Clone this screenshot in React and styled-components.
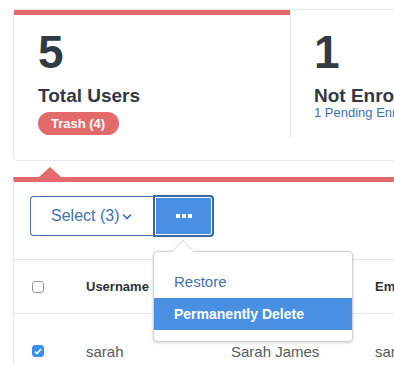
import styled, { createGlobalStyle } from 'styled-components'

const GlobalStyle = createGlobalStyle`
  html, body {
    margin: 0;
    padding: 0;
    background: #ffffff;
    font-family: 'Liberation Sans', Arial, sans-serif;
    overflow: hidden;
  }
`

const users = [
    { username: 'sarah', name: 'Sarah James', email: 'sarah@example.com', checked: true },
]

export default function App(){
    return(
        <Page>
            <GlobalStyle/>
            <StatsCard>
                <Stat active>
                    <Number>5</Number>
                    <Label>Total Users</Label>
                    <Badge>Trash (4)</Badge>
                </Stat>
                <Stat>
                    <Number>1</Number>
                    <Label>Not Enrolled</Label>
                    <SubLink>1 Pending Enrollment</SubLink>
                </Stat>
            </StatsCard>

            <Panel>
                <Toolbar>
                    <ButtonGroup>
                        <SelectButton>
                            Select (3)
                            <svg width="10" height="7" viewBox="0 0 10 7" fill="none">
                                <path d="M1 1.5l4 4 4-4" stroke="#3f6fae" strokeWidth="1.6" />
                            </svg>
                        </SelectButton>
                        <MoreButton>
                            <Dots><i/><i/><i/></Dots>
                        </MoreButton>
                        <Menu>
                            <MenuItem>Restore</MenuItem>
                            <MenuItem highlighted>Permanently Delete</MenuItem>
                        </Menu>
                    </ButtonGroup>
                </Toolbar>

                <Table>
                    <HeaderRow>
                        <Cell><Checkbox/></Cell>
                        <HeadCell>Username</HeadCell>
                        <HeadCell>Name</HeadCell>
                        <HeadCell>Email</HeadCell>
                    </HeaderRow>
                    {users.map(u => (
                        <BodyRow key={u.username}>
                            <Cell><Checkbox checked={u.checked}>{u.checked && (
                                <svg width="8" height="7" viewBox="0 0 8 7" fill="none">
                                    <path d="M1 3.6l2 2L7 1" stroke="#fff" strokeWidth="1.6" />
                                </svg>
                            )}</Checkbox></Cell>
                            <Cell>{u.username}</Cell>
                            <Cell>{u.name}</Cell>
                            <Cell>{u.email}</Cell>
                        </BodyRow>
                    ))}
                </Table>
            </Panel>
        </Page>
    )
}

const Page = styled.div`
    width: 394px;
    height: 365px;
    padding: 9px 0 0 13px;
    box-sizing: border-box;
    overflow: hidden;
`

const StatsCard = styled.div`
    display: flex;
    width: 500px;
    height: 152px;
    border: 1px solid #e3e7ee;
    border-radius: 4px;
    box-sizing: border-box;
`

const Stat = styled.div`
    width: ${p => p.active ? '276px' : '230px'};
    flex-shrink: 0;
    box-sizing: border-box;
    padding: 14px 0 0 ${p => p.active ? '24px' : '23px'};
    border-top: 5px solid ${p => p.active ? '#e26a6a' : 'transparent'};
    height: 127px;
    & + & {
        border-left: 1px solid #e3e7ee;
    }
    white-space: nowrap;
`

const Number = styled.div`
    font-size: 46px;
    font-weight: bold;
    color: #313a42;
    line-height: 46px;
`

const Label = styled.div`
    font-size: 19px;
    font-weight: bold;
    color: #313a42;
    margin-top: 10px;
    line-height: 22px;
`

const Badge = styled.span`
    display: inline-block;
    margin-top: 5px;
    height: 23px;
    line-height: 23px;
    padding: 0 14px 0 13px;
    border-radius: 12px;
    background: #e26a6a;
    color: #ffffff;
    font-size: 13px;
    font-weight: bold;
`

const SubLink = styled.div`
    font-size: 13px;
    color: #3e70b4;
    margin-top: -2px;
`

const Panel = styled.div`
    position: relative;
    margin-top: 16px;
    border-top: 5px solid #e26a6a;
    border-left: 1px solid #e3e7ee;
    height: 300px;
    &::before {
        content: '';
        position: absolute;
        left: 25px;
        top: -15px;
        border-left: 11px solid transparent;
        border-right: 11px solid transparent;
        border-bottom: 10px solid #e26a6a;
    }
`

const Toolbar = styled.div`
    display: flex;
    padding: 13px 0 0 16px;
    height: 78px;
    box-sizing: border-box;
    border-bottom: 1px solid #e3e7ee;
`

const ButtonGroup = styled.div`
    position: relative;
    display: flex;
    align-items: center;
    height: 42px;
`

const SelectButton = styled.button`
    display: flex;
    align-items: center;
    gap: 3px;
    height: 40px;
    width: 123px;
    box-sizing: border-box;
    padding: 0 0 0 20px;
    background: #ffffff;
    border: 1px solid #3f6fae;
    border-right: none;
    border-radius: 4px 0 0 4px;
    color: #3f6fae;
    font-family: 'Liberation Sans', Arial, sans-serif;
    font-size: 16px;
    svg { margin-top: 1px; }
`

const MoreButton = styled.button`
    display: flex;
    align-items: center;
    justify-content: center;
    width: 61px;
    height: 42px;
    box-sizing: border-box;
    background: #4a90e2;
    border: 2px solid #3a68a8;
    border-radius: 0 4px 4px 0;
    box-shadow: inset 0 0 0 1px #ffffff;
    padding: 0;
`

const Dots = styled.span`
    display: flex;
    gap: 2px;
    i {
        width: 4px;
        height: 4px;
        background: #ffffff;
    }
`

const Menu = styled.div`
    position: absolute;
    left: 123px;
    top: 56px;
    width: 200px;
    height: 91px;
    box-sizing: border-box;
    padding-top: 14px;
    background: #ffffff;
    border: 1px solid #cfd3d8;
    border-radius: 4px;
    box-shadow: 0 1px 3px rgba(0, 0, 0, 0.18);
    z-index: 2;
    &::before, &::after {
        content: '';
        position: absolute;
        left: 17px;
        border-left: 12px solid transparent;
        border-right: 12px solid transparent;
    }
    &::before {
        top: -12px;
        border-bottom: 12px solid #cfd3d8;
    }
    &::after {
        top: -11px;
        border-bottom: 12px solid #ffffff;
    }
`

const MenuItem = styled.div`
    height: 32px;
    line-height: 32px;
    padding-left: 20px;
    font-size: ${p => p.highlighted ? '14px' : '15px'};
    font-weight: ${p => p.highlighted ? 'bold' : 'normal'};
    color: ${p => p.highlighted ? '#ffffff' : '#3e70b4'};
    background: ${p => p.highlighted ? '#4a90e2' : 'transparent'};
`

const Table = styled.div`
    display: flex;
    flex-direction: column;
`

const HeaderRow = styled.div`
    display: grid;
    grid-template-columns: 54px 145px 144px 200px;
    align-items: center;
    height: 53px;
    padding-left: 18px;
    border-bottom: 1px solid #e3e7ee;
`

const BodyRow = styled(HeaderRow)`
    height: 74px;
    border-bottom: none;
`

const Cell = styled.div`
    font-size: 15px;
    color: #555b61;
    white-space: nowrap;
`

const HeadCell = styled.div`
    font-size: 13px;
    font-weight: bold;
    color: #2c3238;
    white-space: nowrap;
`

const Checkbox = styled.span`
    display: flex;
    align-items: center;
    justify-content: center;
    width: 12px;
    height: 12px;
    box-sizing: border-box;
    border-radius: 3px;
    border: 1px solid ${p => p.checked ? '#3b8ff0' : '#9a9a9a'};
    background: ${p => p.checked ? '#3b8ff0' : '#ffffff'};
`
